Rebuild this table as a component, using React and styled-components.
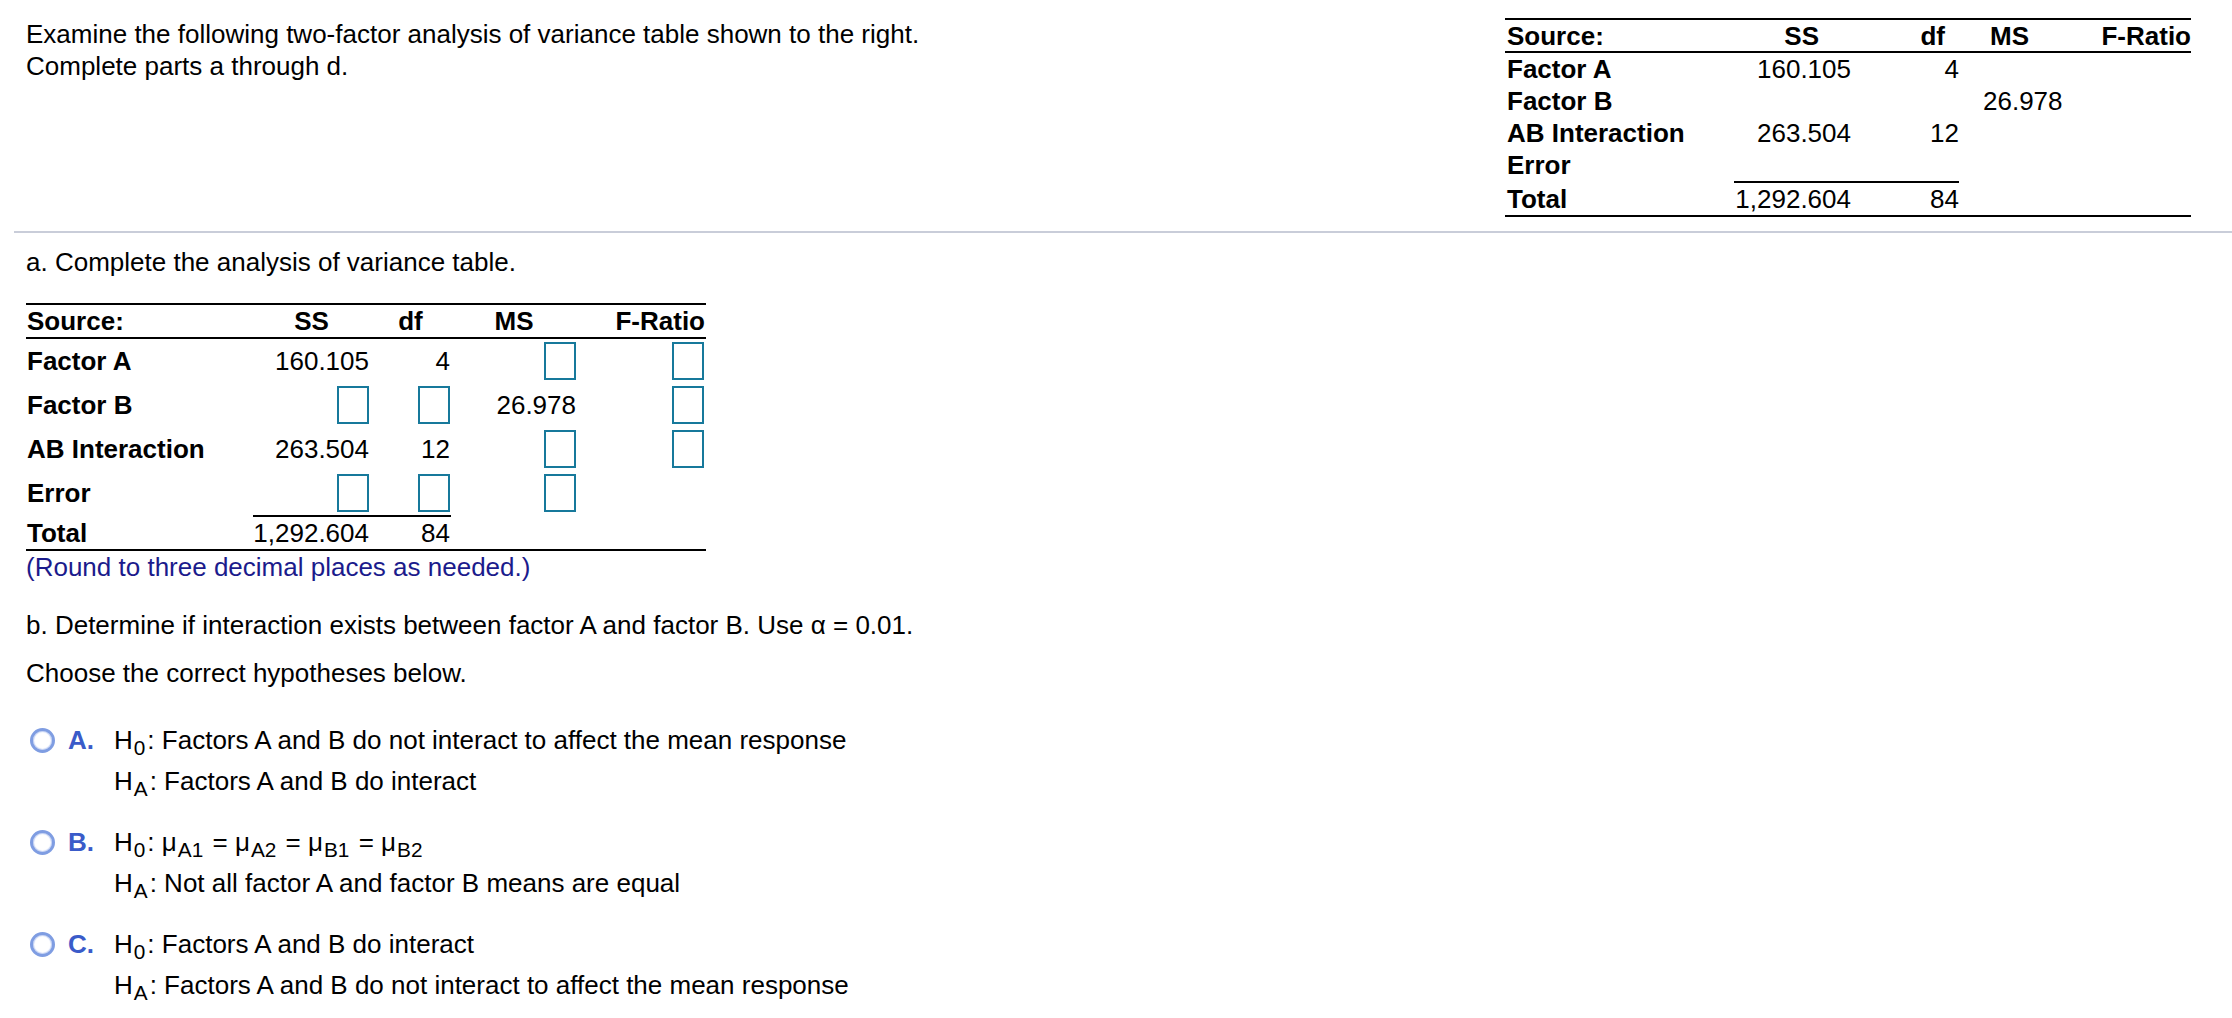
import React from 'react';
import styled, { createGlobalStyle } from 'styled-components';

const GlobalStyle = createGlobalStyle`
  html, body {
    margin: 0;
    padding: 0;
    background: #fff;
  }
  body {
    font-family: 'Liberation Sans', Arial, sans-serif;
    font-size: 26px;
    color: #000;
  }
`;

const Page = styled.div`
  width: 100%;
`;

const Top = styled.div`
  display: flex;
  justify-content: space-between;
  align-items: flex-start;
  padding: 18px 41px 14px 26px;
`;

const Intro = styled.p`
  margin: 0;
  line-height: 32px;
`;

const Divider = styled.div`
  height: 2px;
  margin-left: 14px;
  background: #c9cdd9;
`;

const Body = styled.div`
  padding-left: 26px;
`;

const Prompt = styled.p`
  margin: ${p => p.$top || 0}px 0 0;
  line-height: 32px;
`;

const Note = styled.p`
  margin: 0;
  line-height: 32px;
  color: #1b1b8c;
`;

const Grid = styled.div`
  display: grid;
  grid-template-columns: ${p => p.$cols};
  width: max-content;
  margin-top: ${p => p.$top || 0}px;
  border-top: 2px solid #000;
  border-bottom: 2px solid #000;
`;

const justify = { left: 'flex-start', center: 'center', right: 'flex-end' };

const Cell = styled.div`
  box-sizing: border-box;
  display: flex;
  align-items: center;
  justify-content: ${p => justify[p.$align || 'left']};
  height: ${p => p.$h}px;
  padding: 0 ${p => p.$pr || 0}px 0 ${p => p.$pl || 0}px;
  line-height: 32px;
  white-space: nowrap;
  font-weight: ${p => (p.$bold ? 700 : 400)};
  border-bottom: ${p => (p.$head ? '2px solid #000' : 'none')};
  border-top: ${p => (p.$total ? `2px solid ${p.$rule ? '#000' : 'transparent'}` : 'none')};
`;

const Blank = styled.span`
  box-sizing: border-box;
  display: inline-block;
  width: 32px;
  height: 38px;
  border: 2px solid #17799b;
  background: #fff;
`;

const Options = styled.div`
  display: flex;
  flex-direction: column;
  gap: 20px;
  margin-top: 31px;
  padding-left: 4px;
`;

const Option = styled.div`
  display: flex;
  align-items: flex-start;
  line-height: 41px;
`;

const Radio = styled.span`
  box-sizing: border-box;
  flex: none;
  width: 25px;
  height: 25px;
  margin: 8px 13px 0 0;
  border-radius: 50%;
  border: 3px solid #7f9de2;
  box-shadow: inset 0 0 1px 1px #c3d1f4;
  background: #fff;
`;

const Letter = styled.span`
  flex: none;
  width: 46px;
  font-weight: 700;
  color: #3a5bc9;
`;

const Lines = styled.div`
  display: flex;
  flex-direction: column;
`;

const Sub = styled.sub`
  font-size: 0.8em;
  vertical-align: -0.3em;
  line-height: 0;
  margin: 0 2px 0 1px;
`;

const B = <Blank />;

const topTable = {
  cols: '229px 117px 108px 110px 122px',
  rowH: 32,
  headH: 33,
  head: [
    { align: 'left', pl: 2 },
    { align: 'right', pr: 32 },
    { align: 'right', pr: 14 },
    { align: 'left', pl: 31 },
    { align: 'right' },
  ],
  body: [
    { align: 'left', pl: 2 },
    { align: 'right' },
    { align: 'right' },
    { align: 'left', pl: 24 },
    { align: 'right' },
  ],
  rows: [
    ['Factor A', '160.105', '4', '', ''],
    ['Factor B', '', '', '26.978', ''],
    ['AB Interaction', '263.504', '12', '', ''],
    ['Error', '', '', '', ''],
  ],
};

const answerTable = {
  cols: '227px 117px 81px 126px 129px',
  rowH: 44,
  headH: 34,
  head: [
    { align: 'left', pl: 1 },
    { align: 'center' },
    { align: 'center' },
    { align: 'center' },
    { align: 'right', pr: 1 },
  ],
  body: [
    { align: 'left', pl: 1 },
    { align: 'right', pr: 1 },
    { align: 'right', pr: 1 },
    { align: 'right', pr: 1 },
    { align: 'right', pr: 2 },
  ],
  rows: [
    ['Factor A', '160.105', '4', B, B],
    ['Factor B', B, B, '26.978', B],
    ['AB Interaction', '263.504', '12', B, B],
    ['Error', B, B, B, ''],
  ],
};

const headers = ['Source:', 'SS', 'df', 'MS', 'F-Ratio'];
const totals = ['Total', '1,292.604', '84', '', ''];

const AnovaTable = ({ spec, top }) => (
  <Grid $cols={spec.cols} $top={top}>
    {headers.map((h, i) => (
      <Cell key={h} $h={spec.headH} $head $bold $align={spec.head[i].align} $pl={spec.head[i].pl} $pr={spec.head[i].pr}>
        {h}
      </Cell>
    ))}
    {spec.rows.map((row, r) =>
      row.map((v, i) => (
        <Cell key={`${r}-${i}`} $h={spec.rowH} $bold={i === 0} $align={spec.body[i].align} $pl={spec.body[i].pl} $pr={spec.body[i].pr}>
          {v}
        </Cell>
      ))
    )}
    {totals.map((v, i) => (
      <Cell key={`t-${i}`} $h={34} $total $rule={i === 1 || i === 2} $bold={i === 0} $align={spec.body[i].align} $pl={spec.body[i].pl} $pr={spec.body[i].pr}>
        {v}
      </Cell>
    ))}
  </Grid>
);

const choices = [
  {
    key: 'A.',
    h0: <>Factors A and B do not interact to affect the mean response</>,
    ha: <>Factors A and B do interact</>,
  },
  {
    key: 'B.',
    h0: (
      <>
        μ<Sub>A1</Sub> = μ<Sub>A2</Sub> = μ<Sub>B1</Sub> = μ<Sub>B2</Sub>
      </>
    ),
    ha: <>Not all factor A and factor B means are equal</>,
  },
  {
    key: 'C.',
    h0: <>Factors A and B do interact</>,
    ha: <>Factors A and B do not interact to affect the mean response</>,
  },
];

const App = () => (
  <Page>
    <GlobalStyle />
    <Top>
      <Intro>
        Examine the following two-factor analysis of variance table shown to the right.
        <br />
        Complete parts a through d.
      </Intro>
      <AnovaTable spec={topTable} />
    </Top>
    <Divider />
    <Body>
      <Prompt $top={13}>a. Complete the analysis of variance table.</Prompt>
      <AnovaTable spec={answerTable} top={25} />
      <Note>(Round to three decimal places as needed.)</Note>
      <Prompt $top={26}>b. Determine if interaction exists between factor A and factor B. Use α = 0.01.</Prompt>
      <Prompt $top={16}>Choose the correct hypotheses below.</Prompt>
      <Options>
        {choices.map(c => (
          <Option key={c.key}>
            <Radio />
            <Letter>{c.key}</Letter>
            <Lines>
              <span>
                H<Sub>0</Sub>: {c.h0}
              </span>
              <span>
                H<Sub>A</Sub>: {c.ha}
              </span>
            </Lines>
          </Option>
        ))}
      </Options>
    </Body>
  </Page>
);

export default App;
